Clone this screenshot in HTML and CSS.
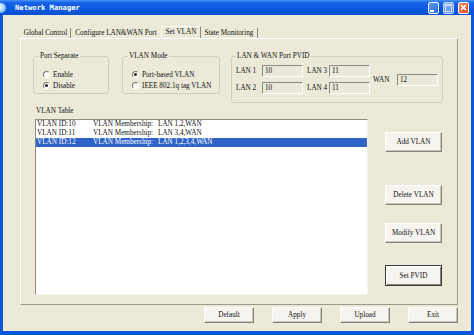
FILE: index.html
```html
<!DOCTYPE html>
<html lang="en">
<head>
    <meta charset="UTF-8">
    <title>Network Manager</title>
    <link rel="stylesheet" href="styles.css">
</head>
<body>
    <div class="window">
        <!-- Title bar -->
        <div class="titlebar">
            <span class="app-icon"></span>
            <span class="title">Network Manager</span>
            <div class="caption-btns">
                <span class="cap cap-min"></span>
                <span class="cap cap-max"></span>
                <span class="cap cap-close">
                    <svg width="7" height="7" viewBox="0 0 7 7"><path d="M1 1L6 6M6 1L1 6" stroke="#fff" stroke-width="1.6"/></svg>
                </span>
            </div>
        </div>

        <div class="client">
            <!-- Tabs -->
            <div class="tabs">
                <div class="tab tab-global">Global Control</div>
                <div class="tab tab-config">Configure LAN&amp;WAN Port</div>
                <div class="tab tab-vlan active">Set VLAN</div>
                <div class="tab tab-state">State Monitoring</div>
            </div>

            <div class="panel">
                <div class="groups">
                    <fieldset class="group group-port">
                        <legend>Port Separate</legend>
                        <div class="radio"><span class="dot"></span>Enable</div>
                        <div class="radio"><span class="dot checked"></span>Disable</div>
                    </fieldset>

                    <fieldset class="group group-mode">
                        <legend>VLAN Mode</legend>
                        <div class="radio"><span class="dot checked"></span>Port-based VLAN</div>
                        <div class="radio"><span class="dot"></span>IEEE 802.1q tag VLAN</div>
                    </fieldset>

                    <fieldset class="group group-pvid">
                        <legend>LAN &amp; WAN Port PVID</legend>
                        <div class="pvid-grid">
                            <span class="pvid-label">LAN 1</span>
                            <span class="field">10</span>
                            <span class="pvid-label pad">LAN 3</span>
                            <span class="field">11</span>
                            <span class="pvid-label wan">WAN</span>
                            <span class="field wan-field">12</span>
                            <span class="pvid-label">LAN 2</span>
                            <span class="field">10</span>
                            <span class="pvid-label pad">LAN 4</span>
                            <span class="field">11</span>
                        </div>
                    </fieldset>
                </div>

                <div class="lower">
                    <div class="table-col">
                        <div class="table-label">VLAN Table</div>
                        <div class="listbox">
                            <div class="row"><span class="c-id">VLAN ID:10</span><span class="c-mem">VLAN Membership:</span><span>LAN 1,2,WAN</span></div>
                            <div class="row"><span class="c-id">VLAN ID:11</span><span class="c-mem">VLAN Membership:</span><span>LAN 3,4,WAN</span></div>
                            <div class="row selected"><span class="c-id">VLAN ID:12</span><span class="c-mem">VLAN Membership:</span><span>LAN 1,2,3,4,WAN</span></div>
                        </div>
                    </div>
                    <div class="side-btns">
                        <button class="btn btn-add">Add VLAN</button>
                        <button class="btn btn-delete">Delete VLAN</button>
                        <button class="btn btn-modify">Modify VLAN</button>
                        <button class="btn btn-pvid default">Set PVID</button>
                    </div>
                </div>
            </div>

            <!-- Bottom buttons -->
            <div class="footer">
                <button class="btn small">Default</button>
                <button class="btn small">Apply</button>
                <button class="btn small">Upload</button>
                <button class="btn small">Exit</button>
            </div>
        </div>
    </div>
</body>
</html>
```

FILE: styles.css
```css
/* Base */
* {
    box-sizing: border-box;
}

body {
    margin: 0;
    font-family: 'Liberation Serif', serif;
    font-size: 7.2px;
    color: #111;
    background: #0d56dc;
}

/* Window frame */
.window {
    width: 474px;
    height: 335px;
    display: flex;
    flex-direction: column;
}

.titlebar {
    height: 15px;
    display: flex;
    align-items: center;
    padding-right: 5px;
    background: linear-gradient(180deg, #4a93f6 0%, #1563e6 18%, #0b58e0 60%, #0a50d2 100%);
}

.app-icon {
    width: 6px;
    height: 10px;
    border-radius: 0 5px 5px 0;
    background: radial-gradient(circle at 0 40%, #ffffff 0%, #9fd0ff 50%, #2c7be5 100%);
    margin-right: 9px;
}

.title {
    font-family: 'DejaVu Sans Mono', monospace;
    font-weight: bold;
    font-size: 7.2px;
    color: #fff;
}

.caption-btns {
    margin-left: auto;
    display: flex;
    gap: 4px;
    align-items: center;
}

.cap {
    width: 11px;
    height: 12px;
    border: 1px solid #fff;
    border-radius: 2px;
    display: flex;
    align-items: center;
    justify-content: center;
}

.cap-min {
    background: linear-gradient(135deg, #5b9cf8, #2a68e6);
}

.cap-min::after {
    content: "";
    width: 4px;
    height: 2px;
    background: #fff;
    margin: 6px 3px 0 0;
}

.cap-max {
    background: linear-gradient(135deg, #8fb5f7, #5d8fe9);
    border-color: #c6d8fb;
}

.cap-max::after {
    content: "";
    width: 5px;
    height: 5px;
    border: 1px solid #c9dafb;
    border-top-width: 2px;
}

.cap-close {
    background: linear-gradient(135deg, #f08a5c, #d9471c);
}

/* Client area */
.client {
    flex: 1;
    background: #ece9d8;
    border-left: 3px solid #0d56dc;
    border-right: 3px solid #0d56dc;
    border-bottom: 4px solid #0d56dc;
    padding: 11px 13px 0 17px;
}

/* Tabs */
.tabs {
    display: flex;
    align-items: flex-end;
    height: 12px;
    padding-left: 1px;
}

.tab {
    height: 10px;
    line-height: 10px;
    text-align: center;
    white-space: nowrap;
    border-right: 1px solid #8c8a7c;
}

.tab-global { width: 50px; }
.tab-config { width: 90px; border-right: none; }
.tab-vlan { width: 40px; }
.tab-state { width: 57px; }

.tab.active {
    height: 12px;
    line-height: 11px;
    border-left: 1px solid #fff;
    border-top: 1px solid #fff;
    background: #ece9d8;
}

/* Tab panel */
.panel {
    height: 267px;
    border: 1px solid;
    border-color: #fff #9d9a8a #9d9a8a #fff;
    padding: 12px 0 0 12px;
}

.groups {
    display: flex;
    align-items: flex-start;
}

.group {
    margin: 0;
    border: 1px solid #d0cebf;
    border-radius: 3px;
    min-width: 0;
}

.group legend {
    padding: 0 1px;
    margin-left: -4px;
    line-height: 10px;
}

.group-port {
    width: 76px;
    padding: 8px 0 2px 9px;
    margin-right: 13px;
}

.group-mode {
    width: 98px;
    padding: 8px 0 2px 9px;
    margin-right: 11px;
}

.group-pvid {
    width: 212px;
    padding: 4px 0 8px 4px;
}

.group-pvid legend {
    margin-left: 0;
}

/* Radio buttons */
.radio {
    height: 11px;
    display: flex;
    align-items: center;
    white-space: nowrap;
}

.dot {
    width: 7px;
    height: 7px;
    border-radius: 50%;
    border: 1px solid;
    border-color: #7a7869 #fff #fff #7a7869;
    background: #fff;
    margin-right: 3px;
    display: flex;
    align-items: center;
    justify-content: center;
}

.dot.checked::after {
    content: "";
    width: 3px;
    height: 3px;
    border-radius: 50%;
    background: #222;
}

/* PVID fields */
.pvid-grid {
    display: grid;
    grid-template-columns: 26px 41px 26px 41px 27px 41px;
    grid-template-rows: 12px 12px;
    row-gap: 5px;
    align-items: center;
}

.pvid-label {
    white-space: nowrap;
}

.pvid-label.pad {
    padding-left: 4px;
}

.pvid-label.wan {
    grid-column: 5;
    grid-row: 1 / span 2;
    padding-left: 3px;
}

.field {
    height: 12px;
    line-height: 10px;
    padding-left: 2px;
    border: 1px solid;
    border-color: #8d8b7f #fff #fff #8d8b7f;
    background: #ebe8dc;
}

.wan-field {
    grid-column: 6;
    grid-row: 1 / span 2;
}

/* VLAN table */
.lower {
    display: flex;
    margin-top: 2px;
}

.table-label {
    line-height: 10px;
    padding-left: 3px;
    margin-top: 1px;
    margin-bottom: 3px;
}

.listbox {
    width: 333px;
    height: 176px;
    margin-left: 2px;
    background: #fff;
    border: 1px solid;
    border-color: #8e8c80 #f4f3ee #f4f3ee #8e8c80;
}

.row {
    display: flex;
    height: 9px;
    line-height: 9px;
    padding-left: 1px;
    white-space: nowrap;
}

.row.selected {
    background: #2f63c8;
    color: #fff;
}

.c-id { width: 56px; }
.c-mem { width: 65px; }

/* Buttons */
.btn {
    font-family: 'Liberation Serif', serif;
    font-size: 7.2px;
    color: #111;
    background: #f5f4ee;
    border: 1px solid;
    border-color: #fff #85837a #85837a #fff;
    box-shadow: inset -1px -1px #c9c6b8;
    padding: 0;
    cursor: pointer;
}

.side-btns {
    display: flex;
    flex-direction: column;
    padding-top: 27px;
    margin-left: 17px;
}

.side-btns .btn {
    width: 57px;
    height: 20px;
}

.btn-delete { margin-top: 33px; }
.btn-modify { margin-top: 18px; }
.btn-pvid { margin-top: 22px; }

.side-btns .btn.default {
    height: 21px;
    border-color: #3a3a36;
    box-shadow: inset 1px 1px #fff, inset -1px -1px #85837a;
}

.footer {
    display: flex;
    justify-content: flex-end;
    gap: 18px;
    margin-top: 2px;
}

.btn.small {
    width: 50px;
    height: 16px;
}
```
